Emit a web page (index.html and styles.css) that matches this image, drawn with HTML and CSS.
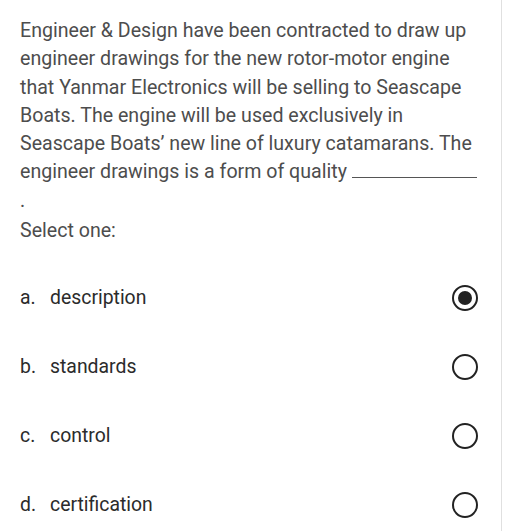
FILE: index.html
```html
<!DOCTYPE html>
<html>
<head>
<meta charset="utf-8">
<link rel="stylesheet" href="styles.css">
</head>
<body>
<div class="page">
  <div class="question">
    <p class="qtext">Engineer &amp; Design have been contracted to draw up engineer drawings for the new rotor-motor engine that Yanmar Electronics will be selling to Seascape Boats. The engine will be used exclusively in Seascape Boats’ new line of luxury catamarans. The engineer drawings is a form of quality <span class="blank"></span><br>.</p>
    <p class="prompt">Select one:</p>
    <div class="options">
      <div class="option">
        <span class="letter">a.</span><span class="label">description</span>
        <span class="radio checked"></span>
      </div>
      <div class="option">
        <span class="letter">b.</span><span class="label">standards</span>
        <span class="radio"></span>
      </div>
      <div class="option">
        <span class="letter">c.</span><span class="label">control</span>
        <span class="radio"></span>
      </div>
      <div class="option">
        <span class="letter">d.</span><span class="label">certification</span>
        <span class="radio"></span>
      </div>
    </div>
  </div>
</div>
</body>
</html>
```

FILE: styles.css
```css
html, body {
  margin: 0;
  padding: 0;
  background: #ffffff;
}
body {
  font-family: Roboto, "Noto Sans", sans-serif;
}
.page {
  width: 502px;
  min-height: 531px;
  border-right: 1px solid #e0e0e0;
  box-sizing: border-box;
}
.question {
  padding: 17px 21px 0 20px;
}
.qtext {
  margin: 0;
  font-size: 19.6px;
  line-height: 28.3px;
  color: #4d4d4d;
}
.blank {
  display: inline-block;
  width: 125px;
  border-bottom: 1px solid #555;
  height: 1px;
  vertical-align: baseline;
}
.prompt {
  margin: 2px 0 0 0;
  font-size: 19.6px;
  line-height: 28.3px;
  color: #4d4d4d;
}
.options {
  margin-top: 18px;
  display: flex;
  flex-direction: column;
}
.option {
  display: flex;
  align-items: center;
  height: 69px;
  font-size: 19.4px;
  color: #2b2b2b;
}
.letter {
  width: 30px;
}
.label {
  flex: 1;
}
.radio {
  width: 22px;
  height: 22px;
  border: 2.5px solid #222;
  border-radius: 50%;
  margin-right: 2px;
  position: relative;
}
.radio.checked::after {
  content: "";
  position: absolute;
  left: 50%;
  top: 50%;
  width: 14px;
  height: 14px;
  margin: -7px 0 0 -7px;
  border-radius: 50%;
  background: #222;
}
```
